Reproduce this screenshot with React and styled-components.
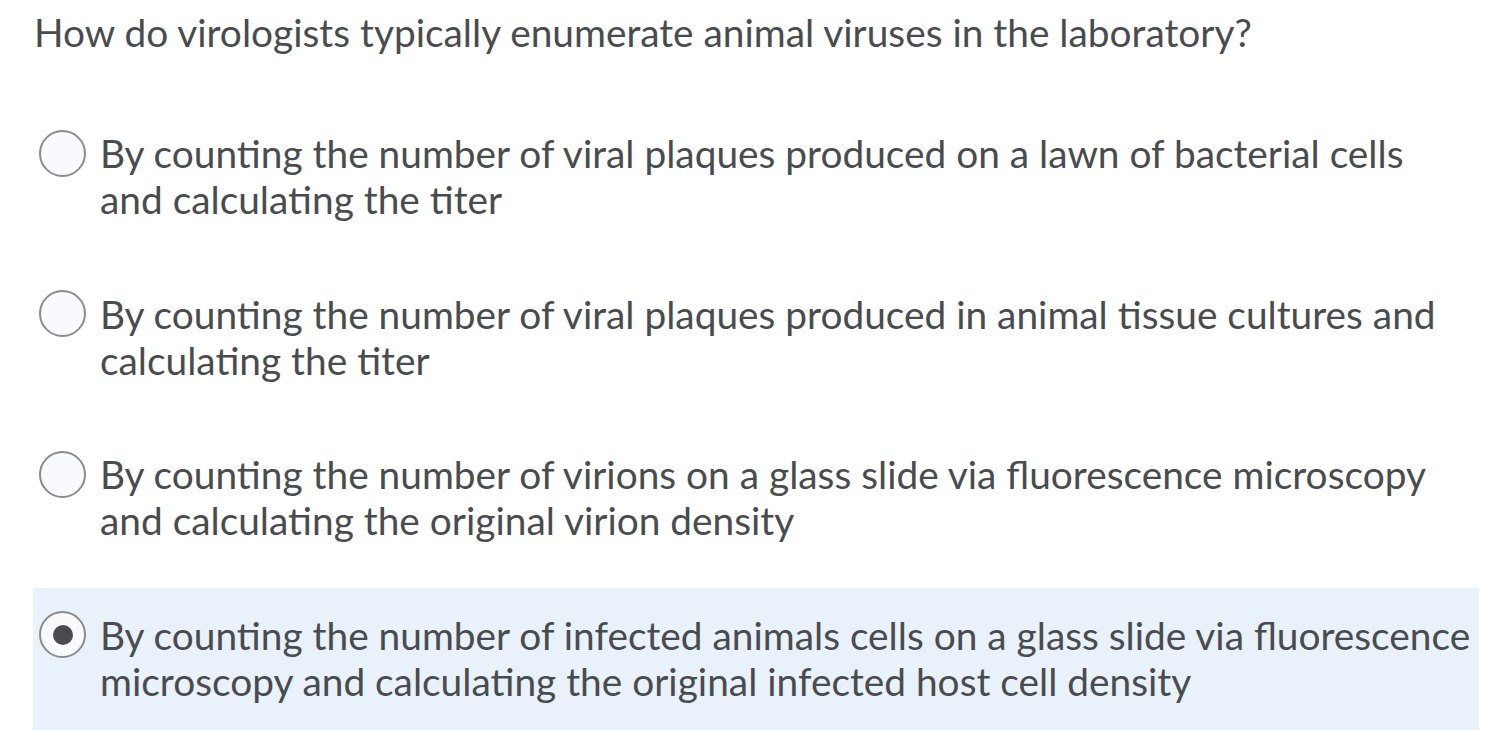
import React, { useState } from "react";
import styled, { createGlobalStyle } from "styled-components";

const GlobalStyle = createGlobalStyle`
  html, body {
    margin: 0;
    padding: 0;
    background: #ffffff;
  }
  body {
    font-family: Lato, "Noto Sans", "Liberation Sans", sans-serif;
    color: #494c4e;
  }
`;

// each answer is kept as the two lines it shows on screen
const options = [
  ["By counting the number of viral plaques produced on a lawn of bacterial cells", "and calculating the titer"],
  ["By counting the number of viral plaques produced in animal tissue cultures and", "calculating the titer"],
  ["By counting the number of virions on a glass slide via fluorescence microscopy", "and calculating the original virion density"],
  ["By counting the number of infected animals cells on a glass slide via fluorescence", "microscopy and calculating the original infected host cell density"],
];

const Page = styled.div`
  padding: 0 7px 0 33px;
  height: 730px;
  overflow: hidden;
`;

const Question = styled.div`
  font-size: 38.85px;
  line-height: 46px;
  padding: 9px 0 0 1px;
  margin-bottom: 51px;
`;

const OptionList = styled.div`
  display: flex;
  flex-direction: column;
  gap: 16.6px;
`;

const OptionRow = styled.label`
  display: flex;
  align-items: flex-start;
  gap: 14px;
  padding: 24px 6px 28px;
  background: ${(p) => (p.$selected ? "#e9f1fb" : "transparent")};
  cursor: pointer;
`;

const Radio = styled.span`
  flex: none;
  box-sizing: border-box;
  width: 47px;
  height: 47px;
  margin-top: -0.5px;
  border-radius: 50%;
  border: 2px solid #8a8b8c;
  background: #f9fafe;
  display: flex;
  align-items: center;
  justify-content: center;

  &::after {
    content: "";
    display: ${(p) => (p.$checked ? "block" : "none")};
    width: 20px;
    height: 20px;
    border-radius: 50%;
    background: #494c4e;
  }
`;

const OptionText = styled.span`
  font-size: 38.85px;
  line-height: 46px;
`;

const Line = styled.span`
  display: block;
  white-space: nowrap;
`;

export default function App() {
  const [selected, setSelected] = useState(3);

  return (
    <>
      <GlobalStyle />
      <Page>
        <Question>How do virologists typically enumerate animal viruses in the laboratory?</Question>
        <OptionList>
          {options.map((lines, i) => (
            <OptionRow key={i} $selected={selected === i} onClick={() => setSelected(i)}>
              <Radio $checked={selected === i} />
              <OptionText>
                {lines.map((line) => (
                  <Line key={line}>{line}</Line>
                ))}
              </OptionText>
            </OptionRow>
          ))}
        </OptionList>
      </Page>
    </>
  );
}
